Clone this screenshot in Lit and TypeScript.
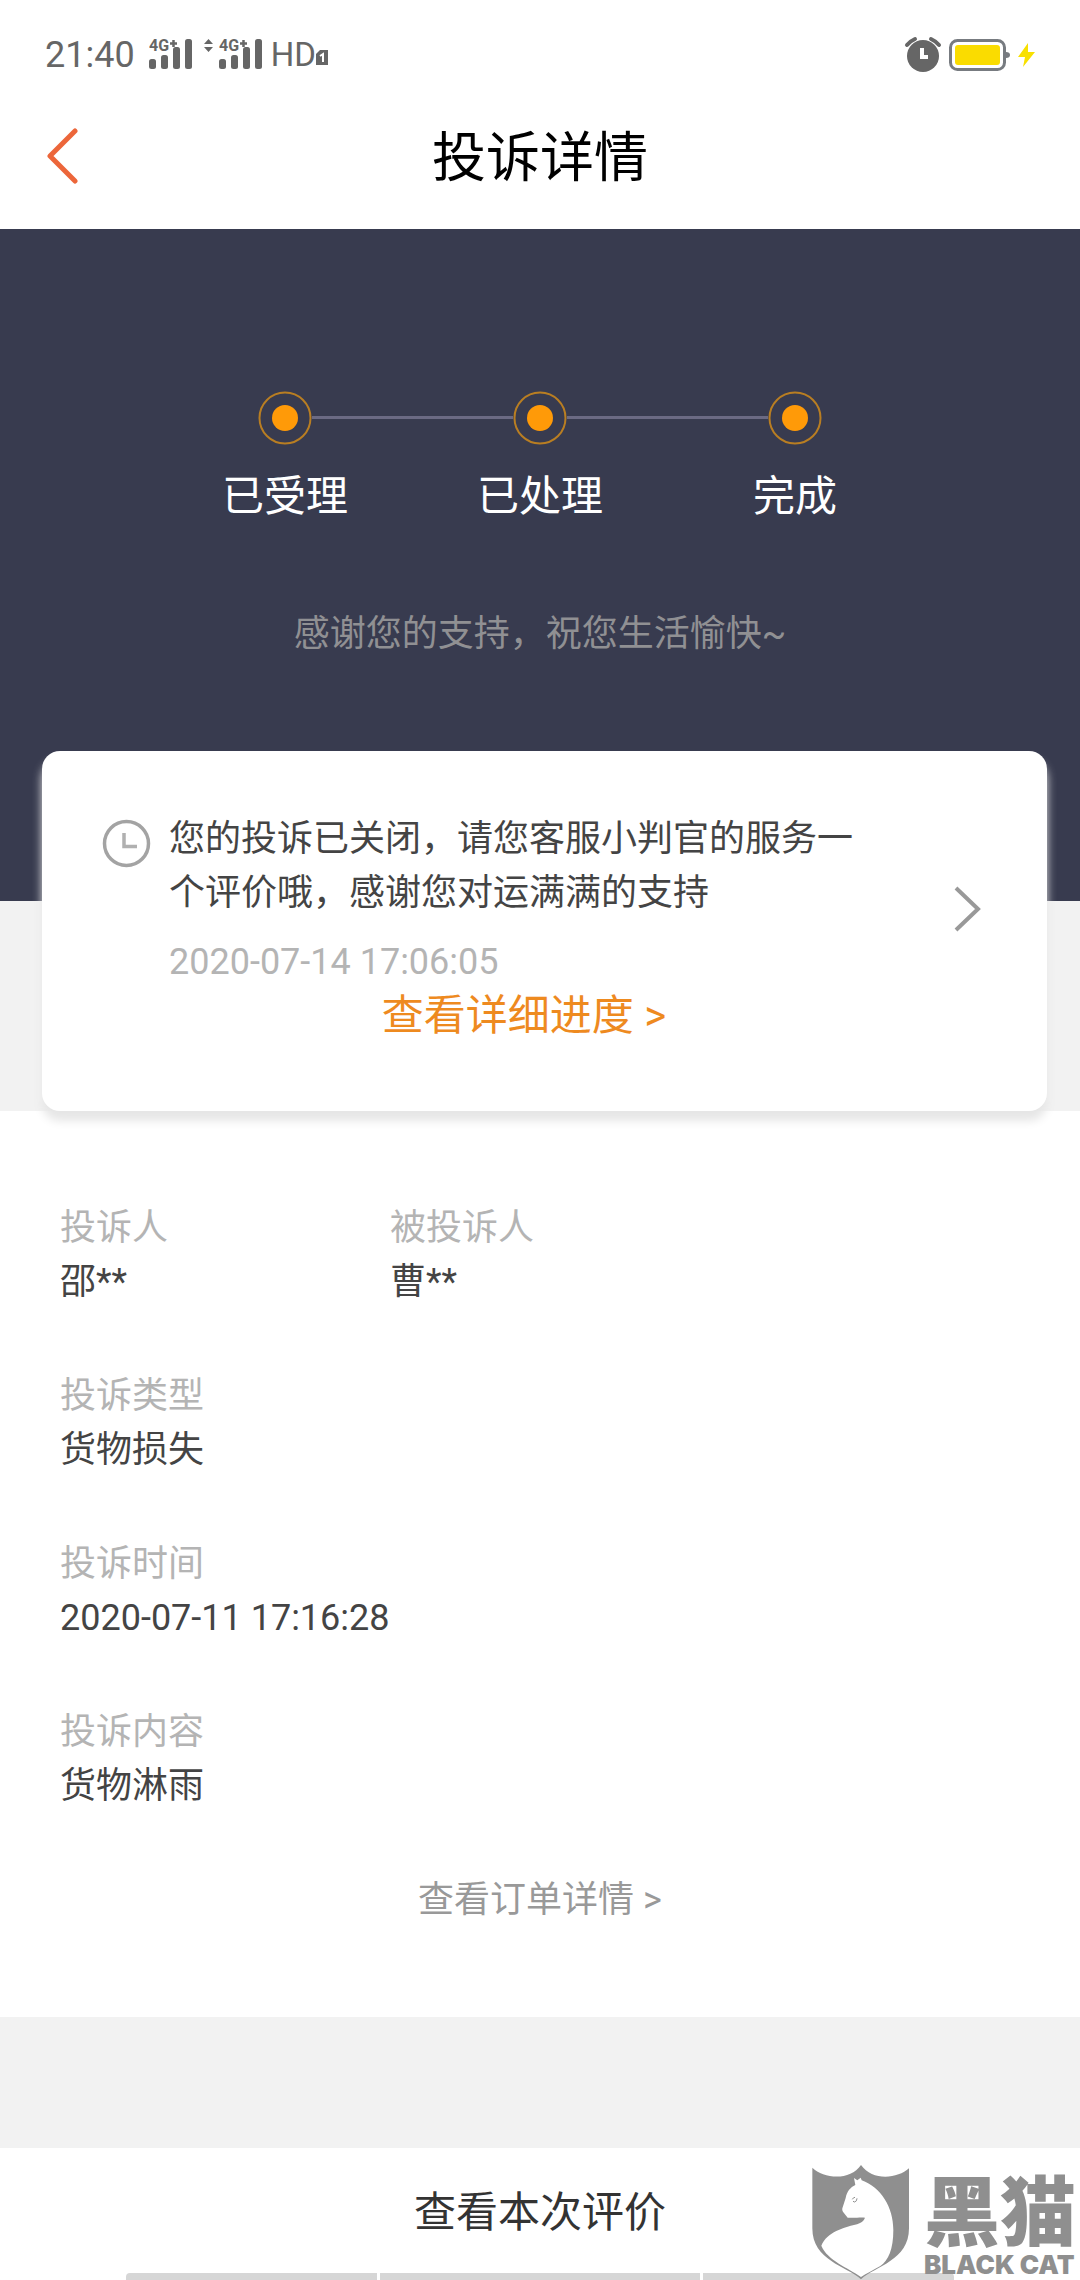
import { LitElement, html, css, svg } from "lit";
import { customElement, property } from "lit/decorators.js";

const TEXT_FONT = css`Roboto, "Noto Sans CJK SC", sans-serif`;

@customElement("status-bar")
class StatusBar extends LitElement {
  static styles = css`
    :host {
      display: block;
      font-family: ${TEXT_FONT};
      color: #666;
    }
    .bar {
      display: flex;
      justify-content: space-between;
      align-items: center;
      padding: 31px 44px 5px 45px;
    }
    .group {
      display: flex;
      align-items: center;
    }
    .time {
      font-size: 36px;
      line-height: 48px;
      margin-right: 14px;
    }
    .network {
      margin-right: 8px;
    }
    .hd {
      font-size: 33px;
      line-height: 48px;
    }
    svg {
      display: block;
    }
    .signal-label {
      font: 700 16px Roboto, sans-serif;
      fill: #666;
    }
  `;

  private signal(x: number) {
    return svg`
      <g transform="translate(${x} 0)" fill="#666">
        <text class="signal-label" x="0" y="13">4G</text>
        <path d="M24.500 2v7M21 5.500h7" stroke="#666" stroke-width="2.500" />
        <rect x="0" y="21" width="7" height="10" rx="2.500" />
        <rect x="12" y="17" width="7" height="14" rx="2.500" />
        <rect x="24" y="9" width="7" height="22" rx="2.500" />
        <rect x="36" y="1" width="7" height="30" rx="2.500" />
      </g>`;
  }

  render() {
    return html`
      <div class="bar">
        <div class="group">
          <span class="time">21:40</span>
          <svg class="network" width="114" height="44" viewBox="0 -5 114 44" aria-hidden="true">
            ${this.signal(0)}
            <path d="M55 6l4.500-5 4.500 5zM55 9h9l-4.500 5z" fill="#666" />
            ${this.signal(70)}
          </svg>
          <span class="hd">HD</span>
          <svg width="12" height="24" viewBox="0 0 12 24" aria-hidden="true">
            <path d="M4 7h8v15H0V11z" fill="#666" />
            <path d="M4 13l3-2v8" stroke="#fff" stroke-width="2" fill="none" />
          </svg>
        </div>
        <svg width="132" height="38" viewBox="0 0 132 38" aria-hidden="true">
          <g fill="none" stroke="#666" stroke-width="4" stroke-linecap="round">
            <path d="M3 9a22 22 0 0 1 8-6M35 9a22 22 0 0 0-8-6" />
          </g>
          <circle cx="19" cy="20" r="16" fill="#666" />
          <path d="M18 12v9h6" fill="none" stroke="#fff" stroke-width="4" />
          <rect x="46.500" y="4.500" width="54" height="29" rx="7" fill="#fff" stroke="#777b80" stroke-width="3" />
          <rect x="51" y="9" width="45" height="20" rx="3" fill="#fadc00" />
          <path d="M102 16q4 0 4 3t-4 3z" fill="#777b80" />
          <path d="M124 7l-10 14h7l-2 10 12-15h-7z" fill="#f8e000" />
        </svg>
      </div>
    `;
  }
}

@customElement("progress-steps")
class ProgressSteps extends LitElement {
  @property({ attribute: false }) steps: string[] = [];

  static styles = css`
    :host {
      display: block;
      font-family: ${TEXT_FONT};
    }
    .steps {
      display: flex;
      width: 100%;
      max-width: 765px;
      margin: 0 auto;
      padding: 0;
      list-style: none;
    }
    .step {
      flex: 1;
      display: grid;
      grid-template-columns: 1fr auto 1fr;
      align-items: center;
      row-gap: 22px;
    }
    .line {
      height: 3px;
      margin-bottom: 2px;
      background: #6b6a83;
    }
    .step:first-child .before,
    .step:last-child .after {
      background: none;
    }
    .dot {
      display: block;
    }
    .label {
      grid-column: 1 / -1;
      text-align: center;
      color: #fff;
      font-size: 42px;
      line-height: 60px;
    }
  `;

  render() {
    return html`
      <ol class="steps">
        ${this.steps.map(
          (step) => html`
            <li class="step">
              <span class="line before"></span>
              <svg class="dot" width="54" height="54" viewBox="0 0 54 54" aria-hidden="true">
                <circle cx="27" cy="27" r="25.500" fill="none" stroke="#b97e22" stroke-width="2" />
                <circle cx="27" cy="27" r="13" fill="#ff9a08" />
              </svg>
              <span class="line after"></span>
              <span class="label">${step}</span>
            </li>
          `
        )}
      </ol>
    `;
  }
}

@customElement("brand-mark")
class BrandMark extends LitElement {
  static styles = css`
    :host {
      display: flex;
      align-items: flex-start;
      gap: 14px;
      color: #8f8f8f;
    }
    .shield {
      display: block;
    }
    .words {
      display: flex;
      flex-direction: column;
      padding-top: 4px;
    }
    .cn {
      font: 900 76px/76px "Noto Sans CJK SC", sans-serif;
    }
    .en {
      font: 900 26px/28px Inter, sans-serif;
      padding-top: 6px;
      white-space: nowrap;
    }
  `;

  render() {
    return html`
      <svg class="shield" width="98" height="115" viewBox="93 105 294 345" aria-hidden="true">
        <path
          fill="#8f8f8f"
          d="M94 113C128 146 207 154 240 105C274 154 350 146 384 115V295C384 392 284 408 240 448C196 408 94 392 94 295Z"
        />
        <path
          fill="#fff"
          d="M219 144L229 151L239 143L242 151C300 172 337 232 337 300C337 358 322 392 298 408C276 421 254 432 240 441C200 412 140 392 121 347C138 305 190 292 222 284C240 280 249 272 252 263C236 261 222 265 200 263L187 247C181 238 185 233 187 226L194 204C198 184 208 172 223 165Z"
        />
        <path d="M214 208q3-6 8-6M216 214l5 2q7-2 7-11" fill="none" stroke="#8f8f8f" stroke-width="3" />
      </svg>
      <span class="words">
        <span class="cn">黑猫</span>
        <span class="en">BLACK CAT</span>
      </span>
    `;
  }
}

interface Field {
  label: string;
  value: string;
}

@customElement("app-root")
class AppRoot extends LitElement {
  static styles = css`
    :host {
      display: flex;
      flex-direction: column;
      position: relative;
      min-height: 100vh;
      background: #f2f2f2;
      color: #444;
      font-family: ${TEXT_FONT};
      font-size: 36px;
      line-height: 54px;
    }
    * {
      box-sizing: border-box;
    }
    svg {
      display: block;
    }
    button {
      border: 0;
      padding: 0;
      background: none;
      color: inherit;
      font: inherit;
    }
    a {
      text-decoration: none;
    }
    .top {
      background: #fff;
    }
    .header {
      display: grid;
      grid-template-columns: 80px 1fr 80px;
      align-items: center;
      padding: 36px 0 31px;
    }
    .back {
      justify-self: end;
      padding-bottom: 6px;
    }
    .title {
      margin: 0;
      text-align: center;
      color: #000;
      font-size: 54px;
      line-height: 78px;
      font-weight: 400;
    }
    .hero {
      padding: 162px 0 240px;
      background: #383b4f;
    }
    .thanks {
      margin: 80px 0 0;
      text-align: center;
      color: #909093;
    }
    .card {
      position: relative;
      z-index: 1;
      display: flex;
      align-items: flex-start;
      margin: -150px 33px 0 42px;
      padding: 61px 65px 68px 60px;
      border-radius: 18px;
      background: #fff;
      box-shadow: 0 10px 10px #e6e6e6;
    }
    .clock {
      flex: none;
      margin: 7px 18px 0 0;
    }
    .message {
      flex: 1;
    }
    .message p {
      margin: 0;
    }
    .message .date {
      margin-top: 15px;
      color: #b4b4b4;
    }
    .progress {
      display: block;
      text-align: center;
      color: #ee8a1f;
      font-size: 42px;
    }
    .open {
      flex: none;
      margin: 74px 0 0 75px;
    }
    .details {
      padding: 90px 60px;
      background: #fff;
    }
    .fields {
      display: grid;
      grid-template-columns: 330px 1fr;
      row-gap: 60px;
      margin: 0;
    }
    .field.wide {
      grid-column: 1 / -1;
    }
    .field dt {
      color: #b4b4b4;
    }
    .field dd {
      margin: 0;
      color: #444;
    }
    .order {
      display: block;
      margin-top: 60px;
      text-align: center;
      color: #999;
    }
    .footer {
      display: flex;
      flex-direction: column;
      margin-top: auto;
      background: #fff;
    }
    .review {
      padding: 35px 0 30px;
      color: #333;
      font-size: 42px;
      line-height: 60px;
    }
    .tabs {
      display: flex;
      gap: 3px;
      padding: 0 126px;
    }
    .tab {
      flex: 25;
      height: 7px;
      background: #d6d6d6;
    }
    .tab.middle {
      flex: 32;
    }
    .tab:first-child {
      border-top-left-radius: 4px;
    }
    .tab:last-child {
      border-top-right-radius: 4px;
    }
    .brand {
      position: absolute;
      right: 4px;
      bottom: 0;
      z-index: 2;
    }
  `;

  private parties: Field[] = [
    { label: "投诉人", value: "邵**" },
    { label: "被投诉人", value: "曹**" },
  ];

  private facts: Field[] = [
    { label: "投诉类型", value: "货物损失" },
    { label: "投诉时间", value: "2020-07-11 17:16:28" },
    { label: "投诉内容", value: "货物淋雨" },
  ];

  private field(f: Field, cls: string) {
    return html`<div class=${cls}><dt>${f.label}</dt><dd>${f.value}</dd></div>`;
  }

  render() {
    return html`
      <div class="top">
        <status-bar></status-bar>
        <header class="header">
          <button class="back" type="button" aria-label="返回">
            <svg width="34" height="56" viewBox="0 0 34 56">
              <path d="M29 3L4 28L29 53" fill="none" stroke="#ec663a" stroke-width="5" stroke-linecap="round" stroke-linejoin="round" />
            </svg>
          </button>
          <h1 class="title">投诉详情</h1>
        </header>
      </div>

      <section class="hero">
        <progress-steps .steps=${["已受理", "已处理", "完成"]}></progress-steps>
        <p class="thanks">感谢您的支持，祝您生活愉快~</p>
      </section>

      <section class="card">
        <svg class="clock" width="49" height="49" viewBox="0 0 49 49" aria-hidden="true">
          <circle cx="24.500" cy="24.500" r="22" fill="none" stroke="#a3a3a3" stroke-width="3.500" />
          <path d="M22 14v13.500h13" fill="none" stroke="#b0b0b0" stroke-width="3.500" />
        </svg>
        <div class="message">
          <p>您的投诉已关闭，请您客服小判官的服务一个评价哦，感谢您对运满满的支持</p>
          <p class="date">2020-07-14 17:06:05</p>
          <a class="progress" href="#progress">查看详细进度 &gt;</a>
        </div>
        <button class="open" type="button" aria-label="查看">
          <svg width="28" height="46" viewBox="0 0 28 46">
            <path d="M2 2L24 23L2 44" fill="none" stroke="#999" stroke-width="4" />
          </svg>
        </button>
      </section>

      <section class="details">
        <dl class="fields">
          ${this.parties.map((f) => this.field(f, "field"))}
          ${this.facts.map((f) => this.field(f, "field wide"))}
        </dl>
        <a class="order" href="#order">查看订单详情 &gt;</a>
      </section>

      <footer class="footer">
        <button class="review" type="button">查看本次评价</button>
        <div class="tabs">
          <span class="tab"></span>
          <span class="tab middle"></span>
          <span class="tab"></span>
        </div>
      </footer>
      <brand-mark class="brand"></brand-mark>
    `;
  }
}
